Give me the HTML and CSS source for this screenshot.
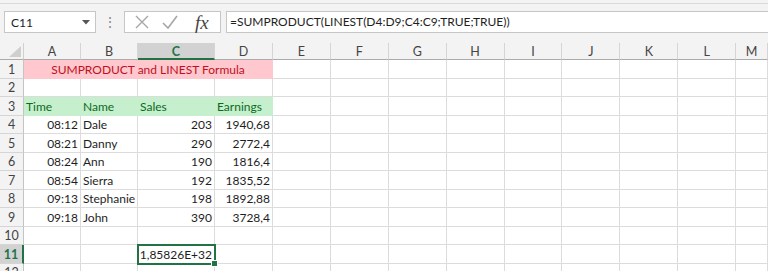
FILE: index.html
```html
<!DOCTYPE html>
<html lang="en">
<head>
    <meta charset="UTF-8">
    <meta name="viewport" content="width=device-width, initial-scale=1.0">
    <title>SUMPRODUCT and LINEST</title>
    <link rel="stylesheet" href="styles.css">
</head>
<body>
    <div class="ribbon-edge"></div>
    <div class="formula-bar">
        <div class="name-box">
            <span>C11</span>
            <svg class="caret" width="8" height="5" viewBox="0 0 8 5"><path d="M0 0h8L4 4.5z" fill="#555"/></svg>
        </div>
        <div class="grip">&#8942;</div>
        <div class="fx-buttons">
            <svg width="14" height="14" viewBox="0 0 14 14"><path d="M1 1L13 13M13 1L1 13" stroke="#a6a6a6" stroke-width="1.4" fill="none"/></svg>
            <svg width="16" height="14" viewBox="0 0 16 14"><path d="M1 8l5 5L15 1" stroke="#a6a6a6" stroke-width="1.6" fill="none"/></svg>
            <span class="fx">fx</span>
        </div>
        <div class="formula-input">=SUMPRODUCT(LINEST(D4:D9;C4:C9;TRUE;TRUE))</div>
    </div>

    <div class="sheet" id="sheet"></div>

    <script>
        const letters = ['A','B','C','D','E','F','G','H','I','J','K','L','M'];
        const data = {
            4: ['08:12', 'Dale', '203', '1940,68'],
            5: ['08:21', 'Danny', '290', '2772,4'],
            6: ['08:24', 'Ann', '190', '1816,4'],
            7: ['08:54', 'Sierra', '192', '1835,52'],
            8: ['09:13', 'Stephanie', '198', '1892,88'],
            9: ['09:18', 'John', '390', '3728,4']
        };
        const heads = ['Time', 'Name', 'Sales', 'Earnings'];
        const sheet = document.getElementById('sheet');

        function cell(text, cls) {
            const div = document.createElement('div');
            div.className = 'cell' + (cls ? ' ' + cls : '');
            if (text) div.textContent = text;
            sheet.appendChild(div);
            return div;
        }

        // column headers
        cell('', 'corner').innerHTML = '<svg width="12" height="11" viewBox="0 0 12 11"><path d="M12 0V11H0z" fill="#cfcfcf"/></svg>';
        letters.forEach(function(l) {
            cell(l, 'col-head' + (l === 'C' ? ' active' : ''));
        });

        for (let r = 1; r <= 12; r++) {
            cell(String(r), 'row-head' + (r === 11 ? ' active' : ''));
            for (let c = 0; c < letters.length; c++) {
                if (r === 1 && c === 0) {
                    cell('SUMPRODUCT and LINEST Formula', 'title');
                    c = 3;
                    continue;
                }
                if (r === 3 && c < 4) {
                    cell(heads[c], 'good');
                    continue;
                }
                if (data[r] && c < 4) {
                    cell(data[r][c], c === 1 ? '' : 'num');
                    continue;
                }
                if (r === 11 && c === 2) {
                    cell('1,85826E+32', 'num selected');
                    continue;
                }
                cell('', '');
            }
        }
    </script>
</body>
</html>
```

FILE: styles.css
```css
body {
    margin: 0;
    font-family: Lato, "Liberation Sans", sans-serif;
    background: #fff;
    color: #1e1e1e;
    overflow: hidden;
}

.ribbon-edge {
    height: 3px;
    background: #f3f3f3;
    border-bottom: 1px solid #d9d9d9;
}

.formula-bar {
    height: 39px;
    box-sizing: border-box;
    background: #f3f3f3;
    padding: 7px 0 0 4px;
    display: flex;
    align-items: flex-start;
}

.name-box {
    width: 92px;
    height: 22px;
    box-sizing: border-box;
    background: #fff;
    border: 1px solid #c6c6c6;
    display: flex;
    align-items: center;
    justify-content: space-between;
    padding: 0 5px 0 6px;
    font-size: 12px;
}

.grip {
    width: 28px;
    text-align: center;
    color: #8a8a8a;
    font-size: 14px;
    line-height: 22px;
}

.fx-buttons {
    width: 97px;
    height: 22px;
    box-sizing: border-box;
    background: #fff;
    border: 1px solid #c6c6c6;
    display: flex;
    align-items: center;
    padding: 0 6px 0 10px;
    gap: 13px;
}

.fx {
    font-family: "Liberation Serif", serif;
    font-style: italic;
    font-size: 19px;
    color: #444;
    margin-left: 4px;
    line-height: 1;
}

.formula-input {
    flex: 1;
    height: 22px;
    box-sizing: border-box;
    margin-left: 5px;
    background: #fff;
    border: 1px solid #c6c6c6;
    border-right: none;
    font-size: 12px;
    line-height: 20px;
    padding-left: 3px;
}

.sheet {
    display: grid;
    grid-template-columns: 24px 57px 57px 77px 58px repeat(8, 57.9px) 1fr;
    grid-template-rows: 17px;
    grid-auto-rows: 18.5px;
    font-size: 12px;
}

.cell {
    box-sizing: border-box;
    border-right: 1px solid #dcdcdc;
    border-bottom: 1px solid #dcdcdc;
    padding: 1px 2px 0;
    white-space: nowrap;
    overflow: hidden;
    display: flex;
    align-items: center;
}

.num {
    justify-content: flex-end;
}

.corner,
.col-head,
.row-head {
    background: #f3f3f3;
    color: #444;
    justify-content: center;
    font-size: 12.5px;
}

.corner {
    align-items: flex-end;
    justify-content: flex-end;
    padding: 0 2px 2px 0;
    border-right-color: #d0d0d0;
    border-bottom-color: #ababab;
}

.col-head {
    border-right-color: #d5d5d5;
    border-bottom-color: #ababab;
}

.row-head {
    border-right-color: #c4c4c4;
    border-bottom-color: #d5d5d5;
}

.col-head.active {
    background: #d2d2d2;
    color: #217346;
    font-weight: bold;
    border-bottom: 2px solid #217346;
}

.row-head.active {
    background: #d2d2d2;
    color: #217346;
    font-weight: bold;
    border-right: 2px solid #217346;
}

.title {
    grid-column: span 4;
    background: #ffc7ce;
    border-color: #ffc7ce;
    color: #c0101c;
    justify-content: center;
}

.good {
    background: #c6efce;
    border-color: #c6efce;
    color: #0b6b1d;
}

.selected {
    position: relative;
    overflow: visible;
    outline: 2px solid #217346;
    outline-offset: -1px;
    z-index: 1;
}

.selected::after {
    content: "";
    position: absolute;
    right: -4px;
    bottom: -4px;
    width: 5px;
    height: 5px;
    background: #217346;
    border: 1px solid #fff;
}
```
